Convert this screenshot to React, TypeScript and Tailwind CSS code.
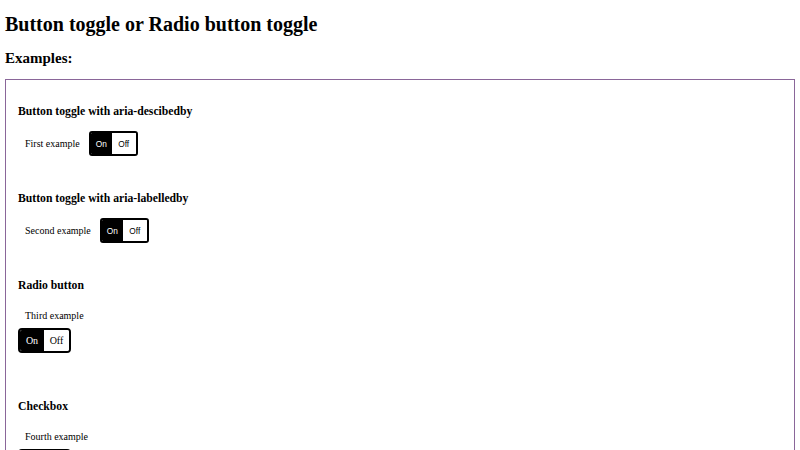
import React from "react";

function SansToggle() {
  return (
    <div className="inline-flex h-[25px] border-2 border-black rounded-[3px] overflow-hidden font-['Liberation_Sans',Arial,sans-serif] text-[8.3px]">
      <span className="w-[21px] bg-black text-white flex items-center justify-center">On</span>
      <span className="w-[24px] bg-white text-black flex items-center justify-center">Off</span>
    </div>
  );
}

function SerifToggle() {
  return (
    <div className="inline-flex h-[25px] border-2 border-black rounded-[4px] overflow-hidden text-[10px]">
      <span className="w-[24px] bg-black text-white flex items-center justify-center">On</span>
      <span className="w-[25px] bg-white text-black flex items-center justify-center">Off</span>
    </div>
  );
}

export default function App() {
  return (
    <div className="px-[5px] pb-[20px] font-['Liberation_Serif','Times_New_Roman',serif] text-black bg-white text-[10px]">
      <h1 className="text-[20px] font-bold leading-[23px] pt-[13.4px] mb-[13.4px]">
        Button toggle or Radio button toggle
      </h1>
      <h2 className="text-[15px] font-bold leading-[17px] mb-[12.6px]">Examples:</h2>
      <div className="border border-[#8a6699] px-[12px] pt-[24.5px] pb-[40px]">
        <h3 className="text-[11.7px] font-bold leading-[14px]">Button toggle with aria-descibedby</h3>
        <div className="flex items-center mt-[12.5px]">
          <span className="ml-[7px] mr-[9px] leading-[12px]">First example</span>
          <SansToggle />
        </div>

        <h3 className="text-[11.7px] font-bold leading-[14px] mt-[35.5px]">Button toggle with aria-labelledby</h3>
        <div className="flex items-center mt-[12.5px]">
          <span className="ml-[7px] mr-[9px] leading-[12px]">Second example</span>
          <SansToggle />
        </div>

        <h3 className="text-[11.7px] font-bold leading-[14px] mt-[35.5px]">Radio button</h3>
        <div className="ml-[7px] leading-[12px] mt-[17.5px]">Third example</div>
        <div className="mt-[6px] flex">
          <SerifToggle />
        </div>

        <h3 className="text-[11.7px] font-bold leading-[14px] mt-[46.5px]">Checkbox</h3>
        <div className="ml-[7px] leading-[12px] mt-[17px]">Fourth example</div>
        <div className="mt-[6px] flex">
          <SerifToggle />
        </div>
      </div>
    </div>
  );
}
